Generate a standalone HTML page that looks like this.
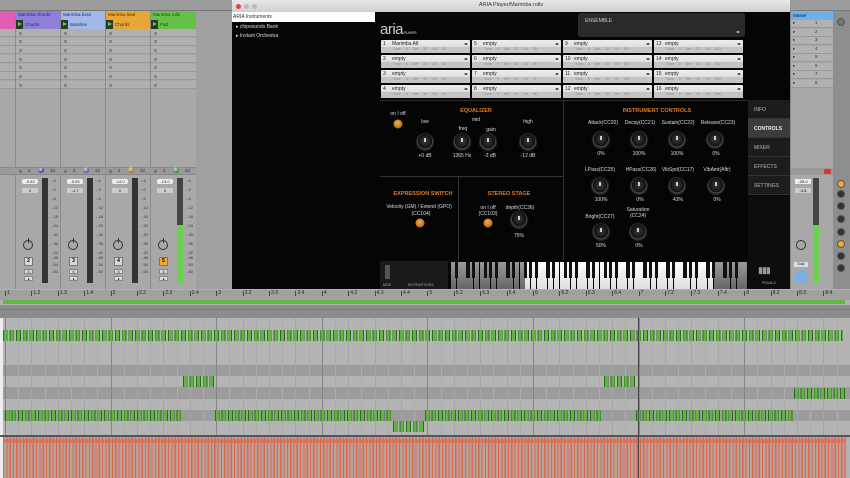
<!DOCTYPE html>
<html><head><meta charset="utf-8">
<style>
*{margin:0;padding:0;box-sizing:border-box}
body{width:850px;height:478px;overflow:hidden;background:#a5a5a5;font-family:"Liberation Sans",sans-serif;position:relative}
.a{position:absolute}
.t{position:absolute;font-size:5px;color:#ddd;white-space:nowrap;transform:translateX(-50%)}
.o{color:#e07a24;font-weight:bold;font-size:5.5px}
.knob{position:absolute;width:16px;height:16px;border-radius:50%;transform:translate(-50%,-50%);background:radial-gradient(circle at 50% 45%,#3a3a3a 0,#151515 55%,#000 58%,#555 62%,#222 75%,#000 100%);box-shadow:0 0 2px #666}
.knob:after{content:"";position:absolute;left:7px;top:4px;width:1.5px;height:4px;background:#ccc}
.btn{position:absolute;width:9px;height:9px;border-radius:50%;transform:translate(-50%,-50%);background:radial-gradient(circle at 45% 40%,#f0b050,#b86a18 70%,#5a3008)}
.slot{position:absolute;width:89px;height:13px;background:linear-gradient(#eee,#cfcfcf);border-radius:1px;font-size:5px;color:#222}
.slot b{position:absolute;left:2px;top:1px;font-weight:normal}
.slot i{position:absolute;left:11px;top:1px;font-style:normal}
.slot u{position:absolute;right:2px;top:1px;text-decoration:none;font-size:4px}
.slot s{position:absolute;left:0;right:0;top:7px;height:6px;background:#c4c4c4;text-decoration:none;font-size:3.5px;color:#888;padding-left:12px;word-spacing:4px}
.tab{position:absolute;left:748px;width:42px;height:19px;background:#1c1c1c;border-bottom:1px solid #333;color:#bbb;font-size:5px;padding:7px 0 0 6px}
.trk{position:absolute;top:11px;height:9px;font-size:4.5px;padding:1px 2px;color:#2a2a6a}
.clip{position:absolute;top:20px;height:9px;font-size:4.5px;padding:2px 0 0 9px;color:#333}
.clip:before{content:"";position:absolute;left:0;top:0;width:7px;height:9px;background:#2a3a2a}
.clip:after{content:"";position:absolute;left:2px;top:2px;border-left:4px solid #6c6;border-top:2.5px solid transparent;border-bottom:2.5px solid transparent}
.lane{position:absolute;left:0;width:850px}
.notes{position:absolute;height:11px;background:repeating-linear-gradient(90deg,#2f6a22 0 0.8px,#62b244 0.8px 3.8px,#2f6a22 3.8px 4.6px,transparent 4.6px 6.6px)}
</style></head><body>

<div class="a" style="left:0;top:0;width:850px;height:11px;background:#9c9c9c;border-bottom:1px solid #777"></div>

<div class="a" style="left:0;top:11px;width:232px;height:278px;background:#a8a8a8"></div>
<div class="trk" style="left:0;width:15px;background:#e35cb4"></div>
<div class="trk" style="left:16px;width:44px;background:#8e80d8">Marimba chords</div>
<div class="trk" style="left:61px;width:44px;background:#a2b8ea">Marimba bass</div>
<div class="trk" style="left:106px;width:44px;background:#e8a634;color:#553300">Marimba lead</div>
<div class="trk" style="left:151px;width:45px;background:#66c04a;color:#1a4a10">Marimba rolls</div>
<div class="a" style="left:0;top:20px;width:15px;height:9px;background:#e35cb4"></div>
<div class="clip" style="left:16px;width:44px;background:#8e80d8">Chords</div>
<div class="clip" style="left:61px;width:44px;background:#a2b8ea">Bassline</div>
<div class="clip" style="left:106px;width:44px;background:#e8a634">Chords</div>
<div class="clip" style="left:151px;width:45px;background:#66c04a">Pad</div>
<div id="sess"></div>
<div class="a" style="left:196px;top:11px;width:36px;height:278px;background:#a0a0a0"></div>

<div class="a" style="left:790px;top:11px;width:43px;height:278px;background:#a8a8a8;border-left:1px solid #888"></div>
<div class="a" style="left:791px;top:12px;width:42px;height:8px;background:#6fb0ea;font-size:4.5px;color:#113;padding:1px 2px">Master</div>
<div class="a" style="left:833px;top:11px;width:17px;height:278px;background:#8e8e8e"></div>
<div id="mast"></div>

<div class="a" style="left:232px;top:0;width:558px;height:12px;background:linear-gradient(#e8e8e8,#cfcfcf);font-size:5.5px;color:#333;text-align:center;padding-top:2px">ARIA Player/Marimba rolls</div>
<div class="a" style="left:236px;top:4px;width:5px;height:5px;border-radius:50%;background:#e0443e"></div>
<div class="a" style="left:244px;top:4px;width:5px;height:5px;border-radius:50%;background:#bbb"></div>
<div class="a" style="left:252px;top:4px;width:5px;height:5px;border-radius:50%;background:#bbb"></div>
<div class="a" style="left:232px;top:12px;width:558px;height:278px;background:#050505"></div>
<div class="a" style="left:232px;top:12px;width:143px;height:10px;background:#fff;font-size:5px;color:#333;padding:2px 1px">ARIA Instruments</div>
<div class="a" style="left:236px;top:24px;font-size:5px;color:#ddd">▸ chipsounds Bank</div>
<div class="a" style="left:236px;top:33px;font-size:5px;color:#ddd">▸ Instant Orchestra</div>
<div class="a" style="left:380px;top:21px;font-size:15px;color:#ccc;letter-spacing:-0.5px">aria<span style="font-size:4px"> PLAYER</span></div>
<div class="a" style="left:578px;top:13px;width:167px;height:24px;background:#2a2a2a;border-radius:3px;font-size:5px;color:#ccc;padding:5px 7px">ENSEMBLE<span style="position:absolute;right:5px;top:16px;font-size:4px">◂▸</span></div>
<div id="slots"></div>

<div class="a" style="left:380px;top:100px;width:368px;height:1px;background:#2a2a2a"></div>
<div class="a" style="left:563px;top:100px;width:1px;height:160px;background:#333"></div>
<div class="a" style="left:380px;top:176px;width:183px;height:1px;background:#333"></div>
<div class="a" style="left:458px;top:177px;width:1px;height:83px;background:#333"></div>

<div class="t o" style="left:476px;top:108px">EQUALIZER</div>
<div class="t" style="left:398px;top:111px">on I off</div><div class="btn" style="left:398px;top:124px"></div>
<div class="t" style="left:425px;top:119px">low</div>
<div class="t" style="left:476px;top:117px">mid</div>
<div class="t" style="left:463px;top:126px">freq</div>
<div class="t" style="left:491px;top:127px">gain</div>
<div class="t" style="left:528px;top:119px">high</div>
<div class="knob" style="left:425px;top:142px"></div>
<div class="knob" style="left:462px;top:142px"></div>
<div class="knob" style="left:488px;top:142px"></div>
<div class="knob" style="left:528px;top:142px"></div>
<div class="t" style="left:425px;top:153px">+0 dB</div>
<div class="t" style="left:462px;top:153px">1365 Hz</div>
<div class="t" style="left:490px;top:153px">-3 dB</div>
<div class="t" style="left:528px;top:153px">-12 dB</div>

<div class="t o" style="left:423px;top:191px">EXPRESSION SWITCH</div>
<div class="t" style="left:419px;top:204px">Velocity (GM) / Extend (GPO)</div>
<div class="t" style="left:421px;top:211px">(CC104)</div>
<div class="btn" style="left:420px;top:223px"></div>
<div class="t o" style="left:509px;top:191px">STEREO STAGE</div>
<div class="t" style="left:488px;top:205px">on I off</div>
<div class="t" style="left:488px;top:211px">(CC103)</div>
<div class="btn" style="left:488px;top:223px"></div>
<div class="t" style="left:520px;top:205px">depth(CC36)</div>
<div class="knob" style="left:519px;top:220px"></div>
<div class="t" style="left:519px;top:233px">75%</div>

<div class="t o" style="left:657px;top:108px">INSTRUMENT CONTROLS</div>
<div class="t" style="left:603px;top:120px">Attack(CC20)</div>
<div class="t" style="left:640px;top:120px">Decay(CC21)</div>
<div class="t" style="left:678px;top:120px">Sustain(CC22)</div>
<div class="t" style="left:718px;top:120px">Release(CC23)</div>
<div class="knob" style="left:601px;top:140px"></div><div class="knob" style="left:639px;top:140px"></div><div class="knob" style="left:677px;top:140px"></div><div class="knob" style="left:715px;top:140px"></div>
<div class="t" style="left:601px;top:151px">0%</div><div class="t" style="left:639px;top:151px">100%</div><div class="t" style="left:677px;top:151px">100%</div><div class="t" style="left:716px;top:151px">0%</div>
<div class="t" style="left:600px;top:167px">LPass(CC25)</div>
<div class="t" style="left:641px;top:167px">HPass(CC26)</div>
<div class="t" style="left:678px;top:167px">VibSpd(CC17)</div>
<div class="t" style="left:717px;top:167px">VibAmt(Aftr)</div>
<div class="knob" style="left:600px;top:186px"></div><div class="knob" style="left:639px;top:186px"></div><div class="knob" style="left:677px;top:186px"></div><div class="knob" style="left:716px;top:186px"></div>
<div class="t" style="left:601px;top:197px">100%</div><div class="t" style="left:640px;top:197px">0%</div><div class="t" style="left:678px;top:197px">43%</div><div class="t" style="left:717px;top:197px">0%</div>
<div class="t" style="left:600px;top:214px">Bright(CC27)</div>
<div class="t" style="left:638px;top:207px">Saturation</div>
<div class="t" style="left:638px;top:213px">(CC24)</div>
<div class="knob" style="left:601px;top:232px"></div><div class="knob" style="left:638px;top:232px"></div>
<div class="t" style="left:601px;top:243px">50%</div><div class="t" style="left:639px;top:243px">0%</div>

<div class="tab" style="top:100px">INFO</div>
<div class="tab" style="top:119px;background:#3c3c3c;color:#eee;font-weight:bold">CONTROLS</div>
<div class="tab" style="top:138px">MIXER</div>
<div class="tab" style="top:157px">EFFECTS</div>
<div class="tab" style="top:176px">SETTINGS</div>
<div class="a" style="left:748px;top:196px;width:42px;height:94px;background:#0d0d0d"></div>
<div class="a" style="left:758px;top:265px;font-size:9px;color:#999;letter-spacing:-1px">▮▮▮</div>
<div class="a" style="left:762px;top:281px;font-size:3.5px;color:#aaa">PEDALS</div>

<div class="a" style="left:380px;top:261px;width:68px;height:28px;background:#1a1a1a;border-radius:2px"></div>
<div class="a" style="left:385px;top:265px;width:5px;height:14px;background:#555"></div>
<div class="a" style="left:383px;top:283px;font-size:3.5px;color:#aaa">MOD</div>
<div class="a" style="left:408px;top:283px;font-size:3.5px;color:#aaa">KEYSWITCHES</div>
<div id="kb" class="a" style="left:451px;top:262px;width:297px;height:27px"></div>

<div class="a" style="left:0;top:289px;width:850px;height:189px;background:#b2b2b2"></div>
<div id="ruler" class="a" style="left:0;top:290px;width:850px;height:10px;background:#a0a0a0"></div>
<div class="a" style="left:3px;top:300px;width:842px;height:4px;background:#62b844"></div>
<div class="a" style="left:0;top:305px;width:850px;height:13px;background:#8c8c8c"></div>
<div class="a" style="left:0;top:309px;width:850px;height:1px;background:#777"></div>
<div class="lane" style="top:318px;height:118px;background:#b4b4b4"></div>
<div class="lane" style="top:365px;height:11px;background:#9c9c9c"></div>
<div class="lane" style="top:387px;height:12px;background:#9c9c9c"></div>
<div class="lane" style="top:410px;height:11px;background:#9c9c9c"></div>
<div id="grid" class="a" style="left:0;top:318px;width:850px;height:118px"></div>
<div class="a" style="left:0;top:318px;width:3px;height:160px;background:#eee"></div>
<div class="notes" style="left:3px;top:330px;width:840px"></div>
<div class="notes" style="left:183px;top:376px;width:31px"></div>
<div class="notes" style="left:604px;top:376px;width:31px"></div>
<div class="notes" style="left:794px;top:388px;width:52px"></div>
<div class="notes" style="left:5px;top:410px;width:178px"></div>
<div class="notes" style="left:215px;top:410px;width:178px"></div>
<div class="notes" style="left:393px;top:421px;width:33px"></div>
<div class="notes" style="left:425px;top:410px;width:178px"></div>
<div class="notes" style="left:636px;top:410px;width:158px"></div>
<div class="a" style="left:0;top:435px;width:850px;height:2px;background:#555"></div>
<div class="a" style="left:3px;top:437px;width:843px;height:41px;background:repeating-linear-gradient(90deg,#e0664c 0 1.2px,#b8a29c 1.2px 3.3px)"></div>
<div class="a" style="left:3px;top:439px;width:843px;height:4px;background:repeating-linear-gradient(90deg,#e0664c 0 2px,#c58a7e 2px 3.3px)"></div>
<div class="a" style="left:638px;top:318px;width:1px;height:160px;background:#444"></div>

<script>
(function(){
var h='';
var cols=[[0,15],[16,44],[61,44],[106,44],[151,45]];
for(var r=0;r<7;r++){var y=29+r*8.67;
 cols.forEach(function(c){h+='<div class="a" style="left:'+c[0]+'px;top:'+y+'px;width:'+c[1]+'px;height:8px;background:#b0b0b0;border-bottom:1px solid #999"></div>';
 if(c[0]>0)h+='<div class="a" style="left:'+(c[0]+3)+'px;top:'+(y+2.5)+'px;width:3px;height:3px;background:#888"></div>';});}
[15,60,105,150,196].forEach(function(x){h+='<div class="a" style="left:'+x+'px;top:11px;width:1px;height:278px;background:#8a8a8a"></div>';});
var strip=[[16,'-5.53','0','2','#4a4ab0'],[61,'-5.53','-4.7','3','#5a6ab8'],[106,'-14.0','0','4','#c08020'],[151,'-13.0','0','5','#3a9a3a']];
h+='<div class="a" style="left:0;top:167px;width:196px;height:8px;background:#9a9a9a;border-top:1px solid #888;border-bottom:1px solid #888"></div>';
strip.forEach(function(s){var x=s[0];
 h+='<div class="a" style="left:'+(x+3)+'px;top:170px;width:3px;height:3px;background:#777"></div>';
 h+='<div class="a" style="left:'+(x+12)+'px;top:168px;font-size:4.5px;color:#333">2</div>';
 h+='<div class="a" style="left:'+(x+22)+'px;top:167px;width:6px;height:6px;border-radius:50%;background:radial-gradient(circle at 40% 35%,#ddd,'+s[4]+' 60%,#222)"></div>';
 h+='<div class="a" style="left:'+(x+34)+'px;top:168px;font-size:4.5px;color:#333">32</div>';
 h+='<div class="a" style="left:'+(x+6)+'px;top:179px;width:16px;height:5px;border-radius:2px;background:#eee;font-size:4px;text-align:center;color:#222">'+s[1]+'</div>';
 h+='<div class="a" style="left:'+(x+6)+'px;top:188px;width:16px;height:5px;background:#ccc;font-size:4px;text-align:center;color:#222">'+s[2]+'</div>';
 var g=(s[3]=='5');
 h+='<div class="a" style="left:'+(x+26)+'px;top:178px;width:6px;height:105px;background:'+(g?'linear-gradient(#444 0,#444 45%,#6cd050 45%)':'#333')+'"></div>';
 var nums=['6','0','6','12','18','24','30','36','42','48','54','60'];
 nums.forEach(function(n,i){h+='<div class="a" style="left:'+(x+35)+'px;top:'+(178+i*(i<9?9:6.6)+(i>=9?18:0))+'px;font-size:4px;color:#333">- '+n+'</div>';});
 h+='<div class="a" style="left:'+(x+7)+'px;top:240px;width:10px;height:10px;border-radius:50%;border:1px solid #333"></div><div class="a" style="left:'+(x+11.5)+'px;top:238px;width:1px;height:5px;background:#333"></div>';
 h+='<div class="a" style="left:'+(x+8)+'px;top:257px;width:9px;height:9px;background:'+(g?'#f2a830':'#d8d8d8')+';border:1px solid #777;font-size:5px;text-align:center;font-weight:bold">'+s[3]+'</div>';
 h+='<div class="a" style="left:'+(x+8)+'px;top:269px;width:9px;height:5px;background:#ddd;border:1px solid #888;font-size:3.5px;text-align:center">S</div>';
 h+='<div class="a" style="left:'+(x+8)+'px;top:276px;width:9px;height:5px;background:#ddd;border:1px solid #888;font-size:3.5px;text-align:center">●</div>';
});
document.getElementById('sess').innerHTML=h;
h='';
for(var i=1;i<=8;i++){h+='<div class="a" style="left:791px;top:'+(20+(i-1)*8.5)+'px;width:42px;height:8px;background:#b2b2b2;border-bottom:1px solid #999;font-size:4.5px;color:#333"><span style="position:absolute;left:2px">▸</span><span style="position:absolute;left:24px">'+i+'</span></div>';}
h+='<div class="a" style="left:791px;top:168px;width:42px;height:7px;background:#9a9a9a"></div><div class="a" style="left:824px;top:169px;width:7px;height:5px;background:#d33;border-radius:1px"></div>';
h+='<div class="a" style="left:795px;top:179px;width:16px;height:5px;background:#eee;font-size:4px;text-align:center">-25.0</div><div class="a" style="left:795px;top:188px;width:16px;height:5px;background:#ccc;font-size:4px;text-align:center">-3.8</div>';
h+='<div class="a" style="left:813px;top:178px;width:6px;height:105px;background:linear-gradient(#444 0,#444 45%,#6cd050 45%)"></div>';
h+='<div class="a" style="left:796px;top:240px;width:10px;height:10px;border-radius:50%;border:1px solid #333"></div>';
h+='<div class="a" style="left:794px;top:262px;width:14px;height:5px;background:#ddd;font-size:3.5px;text-align:center">Solo</div>';
h+='<div class="a" style="left:794px;top:270px;width:14px;height:14px;border-radius:50%;background:#7eaede"></div>';
[18,180,190,202,215,228,240,252,264].forEach(function(y,i){h+='<div class="a" style="left:837px;top:'+y+'px;width:8px;height:8px;border-radius:50%;background:'+(i==0?'#777':(i==6||i==1?'#f2a830':'#333'))+';border:1px solid #555"></div>';});
document.getElementById('mast').innerHTML=h;
h='';var xs=[381,472,563,654],ys=[40,55,70,85];
for(var c=0;c<4;c++)for(var r=0;r<4;r++){var n=c*4+r+1;
 h+='<div class="slot" style="left:'+xs[c]+'px;top:'+ys[r]+'px"><b>'+n+'</b><i>'+(n==1?'Marimba Alt':'empty')+'</i><u>◂▸</u><s>Tune 0 Def 32 1/0 0'+n+'</s></div>';}
document.getElementById('slots').innerHTML=h;
h='';var W=297/52;
for(var i=0;i<52;i++){var x=i*W;var inr=(x>73&&x<261);
 h+='<div class="a" style="left:'+x+'px;top:0;width:'+(W-0.6)+'px;height:27px;background:'+(inr?'linear-gradient(#fff,#ddd)':'linear-gradient(#999,#666)')+'"></div>';}
var pat=[1,1,0,1,1,1,0];
for(var i=0;i<51;i++){if(pat[(i+5)%7]){h+='<div class="a" style="left:'+((i+1)*W-1.7)+'px;top:0;width:3.2px;height:16px;background:#111"></div>';}}
document.getElementById('kb').innerHTML=h;
h='';var g='';
for(var b=0;b<32;b++){var x=5+b*26.4;var bar=Math.floor(b/4)+1,bt=b%4+1;
 h+='<div class="a" style="left:'+x+'px;top:1px;height:5px;width:1px;background:#444"></div><div class="a" style="left:'+(x+2)+'px;top:0;font-size:5px;color:#222">'+(bt==1?bar:bar+'.'+bt)+'</div>';
 g+='<div class="a" style="left:'+x+'px;top:0;width:1px;height:118px;background:'+(bt==1?'#848484':'#a6a6a6')+'"></div>';
 g+='<div class="a" style="left:'+(x+13.2)+'px;top:0;width:1px;height:118px;background:#acacac"></div>';}
document.getElementById('ruler').innerHTML=h;
document.getElementById('grid').innerHTML=g;
})();
</script>
</body></html>
